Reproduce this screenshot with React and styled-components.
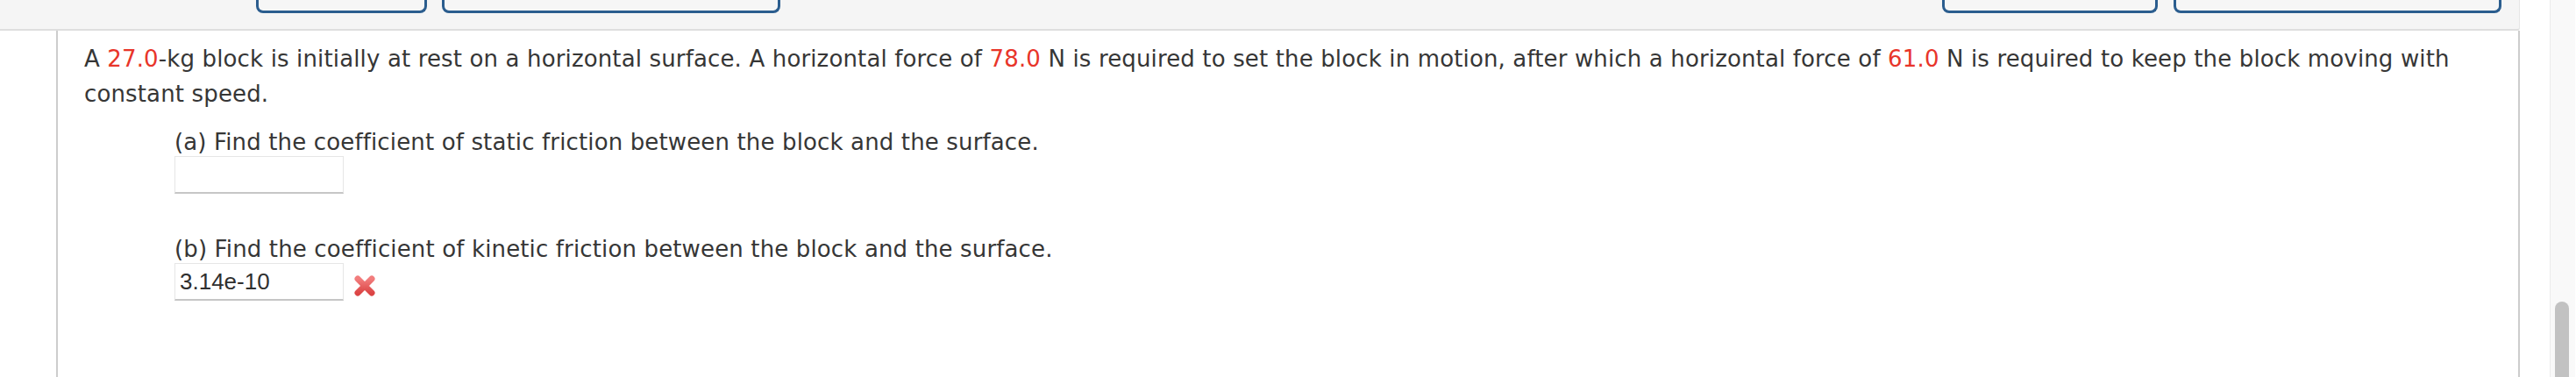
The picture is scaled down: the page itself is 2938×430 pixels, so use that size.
import React from 'react'
import styled, { createGlobalStyle } from 'styled-components'

const GlobalStyle = createGlobalStyle`
  html, body {
    margin: 0;
    padding: 0;
    background: #fff;
    overflow: hidden;
  }
`

const Page = styled.div`
  display: flex;
  width: 2938px;
  height: 430px;
  overflow: hidden;
  background: #fff;
`

const Column = styled.div`
  display: flex;
  flex-direction: column;
  width: 2874px;
  flex-shrink: 0;
`

const TopBar = styled.div`
  display: flex;
  flex-shrink: 0;
  height: 33px;
  padding: 0 20px 0 292px;
  background: #f5f5f5;
  border-bottom: 2px solid #dedede;
  border-right: 1px solid #e6e6e6;
  border-bottom-right-radius: 3px;
`

const ToolGroup = styled.div`
  display: flex;
  gap: ${(p) => p.gap}px;
  margin-left: ${(p) => (p.right ? 'auto' : '0')};
`

const ToolButton = styled.div`
  width: ${(p) => p.w}px;
  height: 12px;
  box-sizing: content-box;
  border: 3px solid #2b5d8e;
  border-top: none;
  border-radius: 0 0 8px 8px;
  background: #f6f6f6;
`

const Content = styled.div`
  flex: 1;
  margin-left: 64px;
  border-left: 2px solid #cdcdcd;
  border-right: 2px solid #cdcdcd;
  padding: 12px 30px 0 30px;
  font-family: 'DejaVu Sans', Verdana, sans-serif;
  font-size: 26px;
  letter-spacing: 0.14px;
  color: #363636;
`

const Intro = styled.p`
  margin: 0;
  line-height: 40px;
`

const Value = styled.span`
  color: #e8352a;
`

const Part = styled.div`
  margin-left: 103px;
  margin-top: ${(p) => p.top}px;
`

const PartLabel = styled.div`
  line-height: 32px;
`

const AnswerRow = styled.div`
  display: flex;
  align-items: center;
  gap: 11px;
`

const AnswerBox = styled.div`
  width: 186px;
  height: 40px;
  padding-left: 5px;
  border: 1px solid #e6e6e6;
  border-bottom: 2px solid #c6c6c6;
  background: #fff;
  font-family: 'Liberation Sans', Arial, sans-serif;
  font-size: 26px;
  letter-spacing: 0;
  line-height: 40px;
  color: #2f2f2f;
`

const WrongMark = styled.svg`
  width: 26px;
  height: 26px;
  margin-top: 8px;
`

const Gutter = styled.div`
  width: 34px;
  flex-shrink: 0;
`

const ScrollTrack = styled.div`
  width: 29px;
  flex-shrink: 0;
  border-left: 1px solid #ececec;
  background: #f9f9f9;
  padding-top: 344px;
  box-sizing: border-box;
  display: flex;
  justify-content: center;
`

const ScrollThumb = styled.div`
  width: 16px;
  height: 86px;
  margin-left: -2px;
  border-radius: 8px 8px 0 0;
  background: #c2c2c2;
`

function Cross() {
  return (
    <WrongMark viewBox="0 0 26 26">
      <defs>
        <linearGradient id="xg" x1="0" y1="0" x2="0" y2="1">
          <stop offset="0" stopColor="#f27d7d" />
          <stop offset="1" stopColor="#dc4545" />
        </linearGradient>
      </defs>
      <path
        d="M5 5 L21 21 M21 5 L5 21"
        stroke="url(#xg)"
        strokeWidth="7"
        strokeLinecap="round"
        fill="none"
      />
    </WrongMark>
  )
}

export default function App() {
  return (
    <>
      <GlobalStyle />
      <Page>
        <Column>
          <TopBar>
            <ToolGroup gap={17}>
              <ToolButton w={189} />
              <ToolButton w={380} />
            </ToolGroup>
            <ToolGroup right gap={18}>
              <ToolButton w={240} />
              <ToolButton w={368} />
            </ToolGroup>
          </TopBar>
          <Content>
            <Intro>
              A <Value>27.0</Value>-kg block is initially at rest on a horizontal surface. A
              horizontal force of <Value>78.0</Value> N is required to set the block in motion,
              after which a horizontal force of <Value>61.0</Value> N is required to keep the
              block moving with constant speed.
            </Intro>
            <Part top={19}>
              <PartLabel>(a) Find the coefficient of static friction between the block and the surface.</PartLabel>
              <AnswerRow>
                <AnswerBox />
              </AnswerRow>
            </Part>
            <Part top={47}>
              <PartLabel>(b) Find the coefficient of kinetic friction between the block and the surface.</PartLabel>
              <AnswerRow>
                <AnswerBox>3.14e-10</AnswerBox>
                <Cross />
              </AnswerRow>
            </Part>
          </Content>
        </Column>
        <Gutter />
        <ScrollTrack>
          <ScrollThumb />
        </ScrollTrack>
      </Page>
    </>
  )
}
